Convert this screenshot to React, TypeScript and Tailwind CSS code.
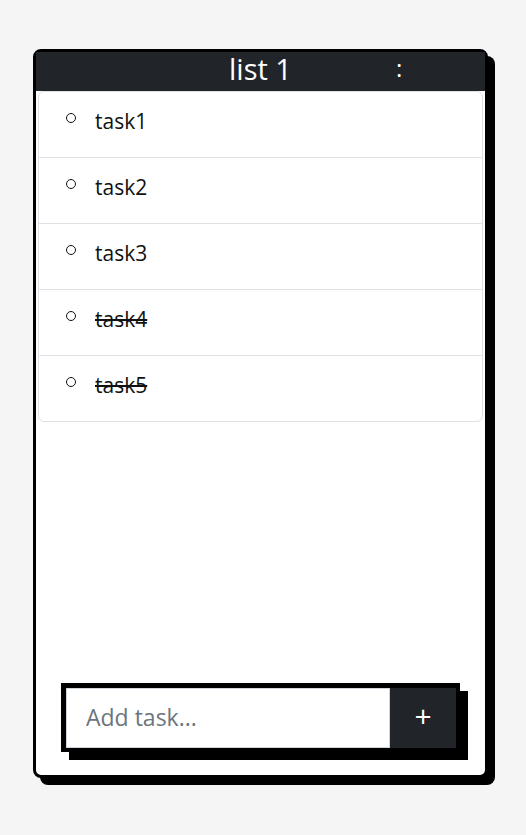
const tasks = [
  { id: 1, title: "task1", done: false },
  { id: 2, title: "task2", done: false },
  { id: 3, title: "task3", done: false },
  { id: 4, title: "task4", done: true },
  { id: 5, title: "task5", done: true },
];

export default function App() {
  return (
    <div
      className="min-h-screen bg-[#f5f5f5] pt-[49px] pl-[33px]"
      style={{ fontFamily: '"Open Sans", "Noto Sans", sans-serif' }}
    >
      <div className="w-[455px] h-[729px] bg-white border-[3px] border-black rounded-lg shadow-[7px_7px_0_#000] flex flex-col">
        <div className="h-[39px] bg-[#212529] text-white grid grid-cols-[1fr_auto_1fr] items-center">
          <div />
          <h2 className="text-[29px] leading-none pb-[7px]">list 1</h2>
          <div className="pl-[104px] text-[24px] leading-none pb-[7px]">:</div>
        </div>

        <ul className="mx-[2px] border border-[#dee2e6] rounded-md">
          {tasks.map((t, i) => (
            <li
              key={t.id}
              className={`flex items-start pl-[27px] pt-[13px] pb-[19px] ${i > 0 ? "border-t border-[#dee2e6]" : ""}`}
            >
              <span className="mt-[8px] w-[10px] h-[10px] rounded-full border-[1.5px] border-[#111] shrink-0" />
              <span
                className={`ml-[19px] text-[21px] leading-[33px] text-[#111] ${t.done ? "line-through decoration-[1.5px]" : ""}`}
              >
                {t.title}
              </span>
            </li>
          ))}
        </ul>

        <div className="flex-1" />

        <form className="mx-[25px] mb-[23px] flex border-[5px] border-r-4 border-b-4 border-black shadow-[8px_8px_0_#000]">
          <input
            placeholder="Add task..."
            className="flex-1 h-[60px] border border-[#ced4da] pl-[19px] pb-[3px] text-[23px] text-[#212529] placeholder:text-[#6c757d] outline-none"
          />
          <button
            type="button"
            className="w-[66px] h-[60px] bg-[#212529] text-white text-[30px] leading-none pb-[4px]"
          >
            +
          </button>
        </form>
      </div>
    </div>
  );
}
